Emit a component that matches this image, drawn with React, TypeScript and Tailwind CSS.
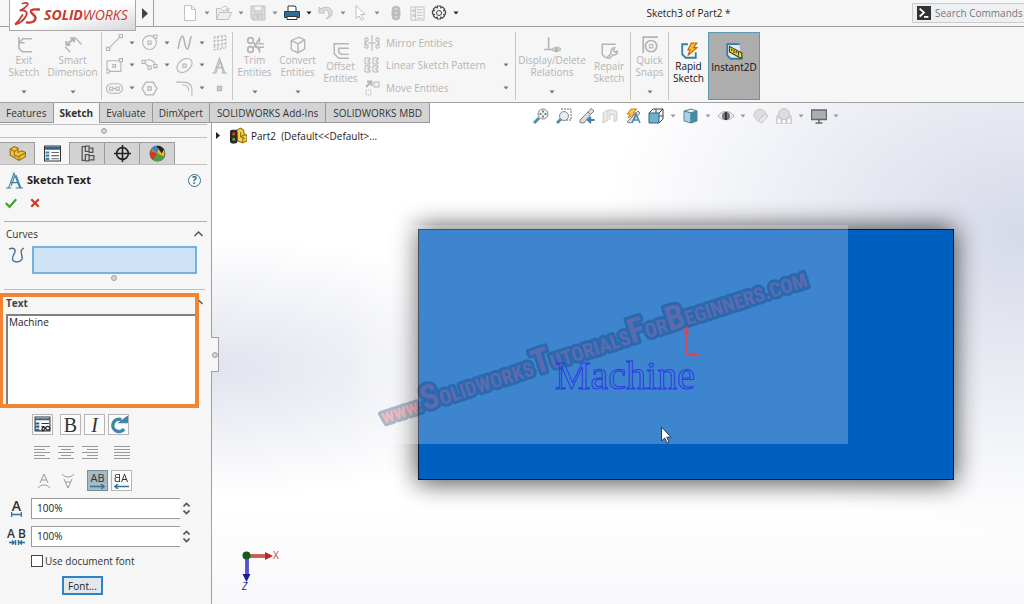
import { ReactNode, useState } from "react";

const tabs = [
    { label: "Features", pad: "px-1.5" },
    { label: "Sketch", pad: "px-1.5" },
    { label: "Evaluate", pad: "px-1.5" },
    { label: "DimXpert", pad: "px-1.5" },
    { label: "SOLIDWORKS Add-Ins", pad: "px-[7px]" },
    { label: "SOLIDWORKS MBD", pad: "px-[7px]" },
];

function Icon({ size = 16, className = "", children }: { size?: number; className?: string; children: ReactNode }) {
    return (
        <svg
            width={size}
            height={size}
            viewBox="0 0 16 16"
            fill="none"
            stroke="currentColor"
            strokeWidth="1"
            aria-hidden="true"
            className={`shrink-0 ${className}`}
        >
            {children}
        </svg>
    );
}

function Caret({ className = "text-[#777777]" }: { className?: string }) {
    return (
        <svg width="6" height="4" viewBox="0 0 6 4" fill="currentColor" aria-hidden="true" className={`shrink-0 ${className}`}>
            <path d="M0.5 0.5h5L3 3.5z" />
        </svg>
    );
}

/* ---------- title bar ---------- */

function Logo() {
    return (
        <div className="absolute top-0 left-[9px] z-10 flex h-[31px] w-[127px] items-center border border-t-0 border-[#a9a9a9] bg-linear-to-br from-white via-white to-[#d5d6d8] pl-1 text-[#c93a30]">
            <svg width="26" height="26" viewBox="0 0 26 26" fill="none" stroke="currentColor" strokeLinecap="round" aria-hidden="true">
                <path d="M8.500 1.500c4-1.200 6.500-.5 5 1.500C12 5 9.500 7 6.500 8.500" strokeWidth="1.600" />
                <path d="M6.500 8.500c5.500-.5 7.500 1.500 5.500 5.500-2.500 4.500-7 7.500-11 8.500 3-2.500 5.500-6 7.500-9.500" strokeWidth="1.800" />
                <path d="M25 7.500c-5-.5-8.500 0-8 2.500.5 2 4.500 3 4.500 6 0 3.500-4 5-8.500 4.500" strokeWidth="2.400" />
            </svg>
            <span className="ml-1 font-['Open_Sans',sans-serif] text-sm leading-5 italic">
                <b>SOLID</b>WORKS
            </span>
        </div>
    );
}

function QuickAccess() {
    const items: { label: string; icon: ReactNode; dark?: boolean }[] = [
        { label: "New", icon: <path d="M2.500 .5h7l4 4v11h-11zM9.500 .5v4h4" fill="#fff" /> },
        {
            label: "Open",
            icon: (
                <>
                    <path d="M.5 14.500v-11h4l2 2h6v2M.5 14.500l3-7h12l-3 7z" fill="#eeeeee" />
                    <path d="M6 3c2-3 6-2 6 2m0 0-2-2m2 2 2-2" />
                </>
            ),
        },
        { label: "Save", icon: <path d="M1 1h14v14H3l-2-2zM4 1v5h8V1M4 15V9h8v6M6 11h4M6 13h4" fill="#dddddd" /> },
        {
            label: "Print",
            dark: true,
            icon: (
                <>
                    <path d="M4 7V1h7l1 1v5" fill="#fff" stroke="#333333" />
                    <path d="M.5 6.500h15v6H.5z" fill="#2f6f96" stroke="#20465e" />
                    <path d="M3 11.500h10v3H3z" fill="#ffffff" stroke="#333333" />
                </>
            ),
        },
        { label: "Undo", icon: <path d="M1 2v6h6L5 6c3-2 6 0 6 3 0 2-1 3-3 5 4-1 7-4 6-8C13 2 7 1 3 4z" fill="#dddddd" /> },
        { label: "Select", icon: <path d="m4 .5 9 9H9l2.500 4.500-2 1.200L7.200 11 4 13.500z" fill="#ffffff" /> },
    ];
    return (
        <div className="flex items-center text-[#c0c0c0]">
            {items.map((item) => (
                <button key={item.label} aria-label={item.label} className="flex w-[34px] items-center justify-between pr-1.5">
                    <Icon size={16}>{item.icon}</Icon>
                    <Caret className={item.dark ? "text-[#222222]" : "text-[#888888]"} />
                </button>
            ))}
            <button aria-label="Rebuild" className="ml-0.5">
                <Icon>
                    <rect x="4" y="1" width="8" height="14" rx="4" fill="#bbbbbb" />
                    <path d="M8 3.500v1M8 7.500v1M8 11.500v1" stroke="#eeeeee" strokeWidth="3" />
                </Icon>
            </button>
            <button aria-label="File properties" className="ml-1.5">
                <Icon size={15}>
                    <path d="M1 1h14v14H1zM3 4h2v2H3zM3 9h2v2H3zM7.500 4H13M7.500 7H13M7.500 10H13M7.500 13H13M6 1v14" />
                </Icon>
            </button>
            <button aria-label="Options" className="ml-1.5 flex items-center gap-1.5 text-[#444444]">
                <Icon>
                    <circle cx="8" cy="8" r="2.500" />
                    <path
                        d="M6.500 1h3l.4 1.800 1.600-.9 2.100 2.100-.9 1.600 1.800.4v3l-1.800.4.9 1.600-2.100 2.100-1.600-.9-.4 1.800h-3l-.4-1.800-1.600.9L2.400 11l.9-1.600L1.500 9V6l1.800-.4-.9-1.600 2.100-2.100 1.600.9z"
                        strokeWidth="1.200"
                    />
                </Icon>
                <Caret className="text-[#222222]" />
            </button>
        </div>
    );
}

function TitleBar() {
    return (
        <header className="relative flex h-[27px] shrink-0 items-center border-b border-[#a0a0a0]">
            <Logo />
            <button aria-label="Show menu" className="ml-[136px] flex h-full w-[18px] items-center justify-center border-r border-[#a0a0a0]">
                <svg width="6" height="11" viewBox="0 0 6 11" fill="#444444" aria-hidden="true">
                    <path d="M0 0l6 5.500L0 11z" />
                </svg>
            </button>
            <div className="pl-7">
                <QuickAccess />
            </div>
            <h1 className="flex-1 pl-1.5 text-center text-[#222222]">Sketch3 of Part2 *</h1>
            <label className="flex h-5 w-[112px] items-center gap-1 border border-r-0 border-[#cccccc] bg-[#eeeff3] pl-1">
                <Icon size={14} className="bg-[#333333] text-white">
                    <path d="m3 3 5 4.500L3 12M8 12.500h5" strokeWidth="2" />
                </Icon>
                <input aria-label="Search Commands" placeholder="Search Commands" className="w-full min-w-0 bg-transparent placeholder:text-[#777777]" />
            </label>
        </header>
    );
}

/* ---------- command ribbon ---------- */

type BigToolProps = { lines: string[]; width: string; icon: ReactNode; caret?: boolean; low?: boolean; className?: string };

function BigTool({ lines, width, icon, caret, low, className = "" }: BigToolProps) {
    return (
        <button className={`flex h-full shrink-0 flex-col items-center ${low ? "pt-2.5" : "pt-1"} ${width} ${className}`}>
            <Icon size={18}>{icon}</Icon>
            <span className="flex flex-col leading-3">
                {lines.map((line) => (
                    <span key={line} className="whitespace-nowrap">{line}</span>
                ))}
            </span>
            {caret && <Caret className="mt-3 text-[#777777]" />}
        </button>
    );
}

const sketchTools: { label: string; icon: ReactNode; caret?: boolean }[] = [
    { label: "Line", caret: true, icon: <path d="M2.500 13.500l11-11M.5 12.500h3v3h-3zM12.500 .5h3v3h-3z" /> },
    { label: "Circle", caret: true, icon: <><circle cx="8" cy="8" r="6.500" /><path d="M6.500 6.500h3v3h-3zM12 1h3v3h-3z" fill="#f6f6f6" /></> },
    { label: "Spline", caret: true, icon: <path d="M2 14C3 8 4 2 6 2s2 12 4.500 12S12 7 14.500 2" strokeWidth="1.500" /> },
    { label: "Plane", icon: <path d="M3 3l11-2v12L3 15zM3 7l11-2M3 11l11-2M6.500 2.500v12M10.500 2v12" strokeDasharray="2 1" /> },
    { label: "Rectangle", caret: true, icon: <><path d="M1 3.500h13v10H1z" /><path d="M6.500 7h2.500v2.500H6.500zM12.500 1.500h3v3h-3zM0 12h3v3H0z" fill="#f6f6f6" /></> },
    { label: "Arc", caret: true, icon: <><path d="M3 5c3-4 9-3 11 3M3 5l5 5" /><path d="M1 3h3v3H1zM6.500 8.500h3v3h-3zM12 7h3v3h-3z" fill="#f6f6f6" /></> },
    { label: "Ellipse", caret: true, icon: <><ellipse cx="8" cy="8" rx="8" ry="5.500" transform="rotate(-40 8 8)" /><path d="M6.500 6.500h3v3h-3z" /></> },
    { label: "Text", icon: <path d="M1 15h4M10 15h5M3 15L8 1l5 14M5 10h6M4.500 15L8.500 4l3 11" /> },
    { label: "Slot", caret: true, icon: <><rect x=".5" y="3.500" width="15" height="9" rx="4.500" /><path d="M3.500 6.500h3v3h-3zM9.500 6.500h3v3h-3zM6.500 8h3" /></> },
    { label: "Polygon", icon: <path d="M4.500 2h7L15 8l-3.500 6h-7L1 8zM6.500 6.500h3v3h-3z" strokeWidth="1.200" /> },
    { label: "Fillet", caret: true, icon: <path d="M0 2h8c4 0 7 3 7 7v6M6 4.500c4 0 6 2 6 6" /> },
    { label: "Point", icon: <path d="M6 6h4v4H6z" fill="#cccccc" /> },
];

const patternTools: { label: string; icon: ReactNode; caret?: boolean }[] = [
    { label: "Mirror Entities", icon: <path d="M8 0v16M1 3h3v3H2v4h2v3H1zM15 3h-3v3h2v4h-2v3h3zM4 8h8" /> },
    {
        label: "Linear Sketch Pattern",
        caret: true,
        icon: <path d="M1 1h5v2H4v2h2v2H1zM9 1h5v2h-2v2h2v2H9zM1 9h5v2H4v2h2v2H1zM9 9h5v2h-2v2h2v2H9z" />,
    },
    { label: "Move Entities", caret: true, icon: <><path d="M2 7l5-5M3 1.500h4.500V6" strokeWidth="1.800" /><path d="M10 2h5v5h-5z" /><path d="M2 10h5v5H2z" strokeDasharray="1 1" /></> },
];

function Separator() {
    return <div className="h-[68px] w-px shrink-0 bg-[#c8c8c8]" />;
}

function Ribbon() {
    return (
        <nav aria-label="Sketch commands" className="flex h-[76px] shrink-0 items-center border-b border-[#a0a0a0] pt-0.5 text-[#b4b4b4]">
            <div className="flex h-[68px] items-center">
                <BigTool width="w-12" lines={["Exit", "Sketch"]} caret icon={<path d="M15 2.500H7L3.500 6v5l3 3H15M3.500 1v5h5" strokeWidth="1.400" />} />
                <BigTool width="mr-1 w-[49px]" lines={["Smart", "Dimension"]} caret icon={<><path d="M2 8l7-6M2 8V4.500M2 8h3.500M9 2v3.500M9 2H5.500" strokeWidth="1.700" /><path d="M1 9.500l4.500 5M9.500 1l6 6.500" strokeWidth="1.200" /></>} />
                <Separator />
                <div className="grid h-[68px] grid-cols-[35px_35px_35px_21px] items-center pl-1">
                    {sketchTools.map((tool) => (
                        <button key={tool.label} aria-label={tool.label} className="flex items-center gap-1.5">
                            <Icon size={17}>{tool.icon}</Icon>
                            {tool.caret && <Caret />}
                        </button>
                    ))}
                </div>
                <Separator />
                <BigTool
                    width="w-[43px]"
                    lines={["Trim", "Entities"]}
                    caret
                    icon={
                        <>
                            <circle cx="4" cy="4" r="2.500" strokeWidth="1.500" />
                            <circle cx="4" cy="12" r="2.500" strokeWidth="1.500" />
                            <path d="M6 11l6-9M6 5l6 8M8 7h8M8 10h8M12 1v5M12 10v5" strokeWidth="1.300" />
                        </>
                    }
                />
                <BigTool width="w-[43px]" lines={["Convert", "Entities"]} caret icon={<path d="M2 4l7-3 5 2.500v8L8 15l-6-3zM2 4l6 3 6-3.500M8 7v8" strokeWidth="1.200" />} />
                <BigTool width="w-[43px]" lines={["Offset", "Entities"]} low icon={<path d="M15 1.500H2v9l4 4h9M15 5.500H6v3.500l2 2h7" strokeWidth="1.300" />} />
                <div className="grid h-[68px] w-[153px] content-around pl-0.5">
                    {patternTools.map((tool) => (
                        <button key={tool.label} className="flex items-center gap-1.5 pr-1.5 text-left">
                            <Icon>{tool.icon}</Icon>
                            <span className="flex-1 whitespace-nowrap">{tool.label}</span>
                            {tool.caret && <Caret />}
                        </button>
                    ))}
                </div>
                <Separator />
                <BigTool
                    width="w-[72px]"
                    lines={["Display/Delete", "Relations"]}
                    caret
                    icon={
                        <>
                            <path d="M5 1v11M1 12h8" strokeWidth="1.500" />
                            <path d="M8 12c2-3 6-3 8 0-2 2.500-6 2.500-8 0z" fill="#dddddd" />
                            <circle cx="12" cy="12" r="1.200" fill="currentColor" />
                        </>
                    }
                />
                <BigTool width="w-[42px]" lines={["Repair", "Sketch"]} low icon={<path d="M14 2H2v9l3 3M6 14l4-4c-1-3 1-5 3-5l-1 3 1.500 1L15.500 8c0 3-2 4-4 3.500l-3 3z" strokeWidth="1.300" />} />
                <Separator />
                <BigTool
                    width="w-[37px]"
                    lines={["Quick", "Snaps"]}
                    caret
                    icon={
                        <>
                            <path d="M2 15V1h13" strokeWidth="1.500" />
                            <circle cx="9" cy="9" r="5" strokeWidth="1.500" />
                            <path d="M7.500 7.500h3v3h-3z" />
                        </>
                    }
                />
                <Separator />
                <BigTool
                    width="w-[39px]"
                    lines={["Rapid", "Sketch"]}
                    low
                    className="text-[#111111]"
                    icon={
                        <>
                            <path d="M7 2H2v9l3 3h9V9" stroke="#2f7fa0" strokeWidth="1.600" />
                            <path d="M10 1h5l-3 4h3l-8 7 2-5H7z" fill="#ffc21a" stroke="#c8641b" />
                        </>
                    }
                />
                <BigTool
                    width="w-[52px]"
                    lines={["Instant2D"]}
                    low
                    className="border border-[#5b9ab0] bg-[#adadad] text-[#111111]"
                    icon={
                        <>
                            <path d="M13 1H2v10l3 3h9" fill="#dfe9ee" stroke="#2f7fa0" strokeWidth="1.600" />
                            <path d="M4 3l11 6v5L4 8z" fill="#f2dc3c" stroke="#3b3b10" />
                            <path d="M6 5v2M8 6v3M10 7v2M12 8v3" stroke="#3b3b10" />
                        </>
                    }
                />
            </div>
        </nav>
    );
}

/* ---------- view toolbar ---------- */

const viewTools: { label: string; icon: ReactNode; caret?: boolean }[] = [
    { label: "Zoom to fit", icon: <><path d="M1 15l5-5" stroke="#4c8fb5" strokeWidth="3" /><circle cx="10" cy="6" r="5" fill="#f4f4f4" stroke="#888888" /><path d="M10 2.500v2M10 7.500v2M6.500 6h2M11.500 6h2" stroke="#555555" strokeWidth="1.500" /></> },
    { label: "Zoom to area", icon: <><path d="M1 15l4-4" stroke="#4c8fb5" strokeWidth="3" /><path d="M5 1h10v11H9" stroke="#666666" strokeDasharray="2 1" /><circle cx="8" cy="8" r="4.500" fill="#e4eef2" stroke="#888888" /></> },
    { label: "Previous view", icon: <><path d="M1 12l8-8 3-3.500 3 2.500-4 4-6 8-4-.5z" fill="#dddddd" stroke="#808080" /><path d="M9 4l3 3" stroke="#808080" /><path d="M15.500 12H9m3-3-3 3 3 3" stroke="#367fae" strokeWidth="2" /></> },
    { label: "Section view", icon: <path d="M1 5l5-3v10l-5 3zM6 2h5l4 2v8l-3 2V7L8 6v6" fill="#e8e8e8" stroke="#cccccc" /> },
    { label: "View annotations", icon: <><path d="M6 1h6L8 5h3L3 10l2-4H2z" fill="#ffc544" stroke="#cb7c20" /><path d="M2 14L13 3l2 2-9 10z" fill="#dddddd" stroke="#808080" /><path d="M7 15l4-9 4 9M9 12h4" stroke="#3f89b5" strokeWidth="1.500" /></> },
    { label: "View orientation", caret: true, icon: <><path d="M1 5l4-4h10v10l-4 4M15 1l-4 4M8 1v4M11 8h4" fill="#f4f4f4" stroke="#444444" /><path d="M1 5h10v10H1z" fill="#6fb1cf" stroke="#31657f" /></> },
    { label: "Display style", caret: true, icon: <><path d="M1 3l7-2 6 2-6 2z" fill="#e3f0f5" stroke="#55859a" /><path d="M1 3l7 2v10l-7-2z" fill="#a6d3e6" stroke="#55859a" /><path d="M8 5l6-2v10l-6 2z" fill="#438baa" stroke="#55859a" /></> },
    { label: "Hide/show items", caret: true, icon: <><path d="M0 8c4-6 12-6 16 0-4 5-12 5-16 0z" fill="#eeeeee" stroke="#aaaaaa" /><circle cx="8" cy="8" r="3.500" fill="#777777" stroke="#666666" /><path d="M8 4v8" stroke="#222222" strokeWidth="1.500" /></> },
    { label: "Edit appearance", icon: <><circle cx="7" cy="7" r="6" fill="#dddddd" stroke="#cccccc" /><path d="M5 13l7-7 3 2-6 7z" fill="#e8e8e8" stroke="#c4c4c4" /></> },
    { label: "Apply scene", caret: true, icon: <><path d="M0 8h16v8H0z" fill="#d8d8d8" stroke="#cccccc" /><circle cx="8" cy="6" r="5.500" fill="#dddddd" stroke="#c4c4c4" /><path d="M3 11v4M8 12v3M13 11v4" stroke="#ffffff" strokeWidth="2" /></> },
    { label: "View settings", caret: true, icon: <><path d="M.5 2h15v9.500H.5z" fill="#a9aeb2" stroke="#666666" strokeWidth="1.300" /><path d="M8 12v3M4.500 15h7" stroke="#666666" strokeWidth="1.500" /></> },
];

function ViewToolbar() {
    return (
        <div className="ml-[103px] flex items-center gap-[7px] pt-1.5">
            {viewTools.map((tool) => (
                <button key={tool.label} aria-label={tool.label} className="flex items-center gap-1.5">
                    <Icon>{tool.icon}</Icon>
                    {tool.caret && <Caret className="text-[#999999]" />}
                </button>
            ))}
        </div>
    );
}

/* ---------- property manager ---------- */

function Dot() {
    return <span className="block size-1.5 rounded-full border border-[#a0a0a0] bg-[#d5d5d5]" />;
}

function Chevron() {
    return (
        <svg width="9" height="6" viewBox="0 0 9 6" fill="none" stroke="#555555" strokeWidth="1.500" aria-hidden="true">
            <path d="M.5 5L4.500 1l4 4" />
        </svg>
    );
}

const panelTabs: { label: string; icon: ReactNode }[] = [
    { label: "Feature tree", icon: <><path d="M1 4l4-2.500 3.500 1.500v4L12 5.500l3.500 1.500v4L9.500 14.500 1 9.500z" fill="#f4c431" stroke="#93701a" /><path d="M1 4l4 2v4l4.500 1M5 6l3.500-2M9.500 14.500v-4l6-3" stroke="#93701a" /></> },
    { label: "Properties", icon: <><path d="M.5 1h15v14H.5z" fill="#ffffff" stroke="#333333" /><path d="M1 3h14" stroke="#2c688a" strokeWidth="3" /><path d="M1.500 7H5M1.500 10H5M1.500 13H5" stroke="#3b83a8" strokeWidth="2" /><path d="M7 7h7M7 10h7M7 13h7" stroke="#666666" /></> },
    { label: "Configurations", icon: <path d="M3 1v14M3 1.500h3M3 14.500h3M6 1h3.500v5H6zM6 9h3.500v6H6zM9.500 3H13v4H9.500zM9.500 10H14v4H9.500z" stroke="#555555" strokeWidth="1.200" /> },
    { label: "DimXpert", icon: <><circle cx="8" cy="8" r="5.500" stroke="#222222" strokeWidth="1.500" /><path d="M8 0v16M0 8h16" stroke="#222222" strokeWidth="1.500" /></> },
    { label: "Display", icon: <><circle cx="8" cy="8" r="7" fill="#e3bb2e" stroke="#666666" /><path d="M8 8L2 4a7 7 0 0 1 7-3z" fill="#3f86c0" stroke="none" /><path d="M8 8L1.500 5A7 7 0 0 0 4 14z" fill="#cc3a2c" stroke="none" /><path d="M8 8l6.500 3A7 7 0 0 1 4 14z" fill="#4c9d3c" stroke="none" /><path d="M7 1l5 7 2-4-4-3z" fill="#222222" stroke="none" /></> },
];

function FormatButton({ label, active, children }: { label: string; active?: boolean; children: ReactNode }) {
    return (
        <button
            aria-label={label}
            className={`flex size-[21px] items-center justify-center border text-[#333333] ${active ? "border-[#7b8c94] bg-[#a8b9c2]" : "border-[#b5b5b5] bg-[#fbfbfb]"}`}
        >
            {children}
        </button>
    );
}

function AlignIcon({ d }: { d: string }) {
    return (
        <Icon size={16} className="text-[#999999]">
            <path d={d} strokeWidth="1.200" />
        </Icon>
    );
}

function PercentField({ id, label, icon }: { id: string; label: string; icon: ReactNode }) {
    const [value, setValue] = useState(100);
    return (
        <div className="flex h-[21px] items-center">
            <label htmlFor={id} aria-label={label} className="flex w-[31px] justify-center pl-0.5">
                {icon}
            </label>
            <input
                id={id}
                value={`${value}%`}
                onChange={(e) => setValue(parseInt(e.target.value) || 0)}
                className="h-full w-[149px] border border-r-0 border-[#999999] bg-white px-[5px] pb-0.5 text-[#222222]"
            />
            <div className="flex h-full w-3 flex-col items-center justify-between py-1">
                <button aria-label={`Increase ${label}`} onClick={() => setValue(value + 1)}>
                    <svg width="7" height="5" viewBox="0 0 7 5" fill="none" stroke="#555555" strokeWidth="1.600" className="block">
                        <path d="M.5 4.500l3-3 3 3" />
                    </svg>
                </button>
                <button aria-label={`Decrease ${label}`} onClick={() => setValue(value - 1)}>
                    <svg width="7" height="5" viewBox="0 0 7 5" fill="none" stroke="#555555" strokeWidth="1.600" className="block">
                        <path d="M.5 .5l3 3 3-3" />
                    </svg>
                </button>
            </div>
        </div>
    );
}

function PropertyPanel() {
    const [text, setText] = useState("Machine");
    const [docFont, setDocFont] = useState(false);

    return (
        <aside className="relative w-[212px] shrink-0 border-r border-[#a0a0a0] bg-[#f6f6f6]">
            <div className="mt-px mr-1 flex h-3.5 items-center justify-center border-y border-[#c0c0c0]">
                <Dot />
            </div>
            <div className="mr-1 flex border-b border-[#c0c0c0] pt-1">
                {panelTabs.map((tab, i) => (
                    <button
                        key={tab.label}
                        aria-label={tab.label}
                        className={`flex h-[22px] w-[35px] items-center justify-center border-r border-[#999999] ${i === 1 ? "bg-[#f6f6f6]" : "border-t bg-[#d3d3d3]"}`}
                    >
                        <Icon size={17}>{tab.icon}</Icon>
                    </button>
                ))}
            </div>

            <div className="mt-[5px] flex h-5 items-center pr-2.5 pl-1.5">
                <Icon size={17} className="text-[#3c7ba0]">
                    <path d="M0 15h5M9 15h7M2.500 15L7.500 1l5.500 14M4.500 10h6M5 13L8 4M9.500 3L14 15" />
                </Icon>
                <h2 className="ml-1 flex-1 text-[11px] font-bold text-[#222222]">Sketch Text</h2>
                <button aria-label="Help" className="flex size-[13px] items-center justify-center rounded-full border border-[#3f6f8c] font-bold text-[#2e6588]">
                    ?
                </button>
            </div>
            <div className="mt-[5px] mr-1 ml-1 flex h-[27px] items-start gap-3 border-b border-[#b0b0b0] pt-0.5 pl-px">
                <button aria-label="OK">
                    <Icon size={12} className="text-[#43a52c]">
                        <path d="M1 8l5 5 9-10" strokeWidth="3" />
                    </Icon>
                </button>
                <button aria-label="Cancel">
                    <Icon size={12} className="text-[#cf3a20]">
                        <path d="M3 3l10 10M13 3L3 13" strokeWidth="3" />
                    </Icon>
                </button>
            </div>

            <section>
                <div className="flex h-6 items-center justify-between pr-2 pl-1.5">
                    <h3 className="font-medium text-[#333333]">Curves</h3>
                    <button aria-label="Collapse curves"><Chevron /></button>
                </div>
                <div className="flex pl-2">
                    <label htmlFor="curves" aria-label="Curves" className="w-6">
                        <Icon size={17} className="text-[#4a6f94]">
                            <path d="M1 3c4-2 7 0 5 4-3 5-2 8 2 8 5 0 6-3 5-6-1-4-1-6 2-7" strokeWidth="1.300" />
                        </Icon>
                    </label>
                    <input id="curves" className="h-7 w-[165px] border-2 border-[#73b3de] bg-[#cfe3f7]" />
                </div>
                <div className="mt-px flex justify-center pl-4">
                    <Dot />
                </div>
            </section>

            <div className="mt-2 mr-1.5 ml-1 h-px bg-[#c0c0c0]" />

            <section className="relative mt-[3px]">
                <div className="absolute top-1.5 right-2"><Chevron /></div>
                <div className="relative h-[115px] w-[199px] border-4 border-l-3 border-[#f28434] bg-[#f6f6f6] pl-[3px]">
                    <label htmlFor="sketch-text" className="block h-[17px] leading-3 font-bold text-[#444444]">
                        Text
                    </label>
                    <textarea
                        id="sketch-text"
                        value={text}
                        onChange={(e) => setText(e.target.value)}
                        className="block h-[90px] w-full resize-none border-t-2 border-l-2 border-[#808080] bg-white px-px leading-3 text-[#222222]"
                    />
                </div>
            </section>

            <div className="mt-1.5 flex gap-[3px] pl-8">
                <FormatButton label="Link to property">
                    <Icon size={17}>
                        <path d="M1 1h14v13H1z" fill="#ffffff" stroke="#333333" />
                        <path d="M1 3h14M1 7h4M1 10h4M1 13h4" stroke="#2f6685" strokeWidth="2" />
                        <path d="M7 7h7M7 10h3" />
                        <path d="M8 14c-1-2 0-4 2-3s2 3 4 2 0-4-2-3-2 4-4 4z" strokeWidth="1.300" />
                    </Icon>
                </FormatButton>
                <div className="ml-1 flex gap-[3px] font-['Liberation_Serif',serif] text-xl leading-5">
                    <FormatButton label="Bold">B</FormatButton>
                    <FormatButton label="Italic"><i>I</i></FormatButton>
                    <FormatButton label="Rotate">
                        <Icon size={18} className="text-[#3d86a8]">
                            <path d="M12.500 11.500A5.500 5.500 0 1 1 10 3.200" strokeWidth="3" />
                            <path d="M8 6h8V0z" fill="#3d86a8" />
                        </Icon>
                    </FormatButton>
                </div>
            </div>
            <div className="mt-2.5 flex gap-2 pl-[34px]">
                <button aria-label="Align left"><AlignIcon d="M0 1.500h16M0 4.500h11M0 7.500h16M0 10.500h11M0 13.500h16" /></button>
                <button aria-label="Center"><AlignIcon d="M0 1.500h16M3 4.500h10M0 7.500h16M3 10.500h10M0 13.500h16" /></button>
                <button aria-label="Align right"><AlignIcon d="M0 1.500h16M5 4.500h11M0 7.500h16M5 10.500h11M0 13.500h16" /></button>
                <button aria-label="Justify" className="ml-2"><AlignIcon d="M0 1.500h16M0 4.500h16M0 7.500h16M0 10.500h16M0 13.500h16" /></button>
            </div>
            <div className="mt-[9px] flex items-center pl-9 text-[#999999]">
                <button aria-label="Flip vertical" className="w-6">
                    <Icon>
                        <path d="M4 10l4-9 4 9M5.500 7h5M2 15c3-4 9-4 12 0" />
                    </Icon>
                </button>
                <button aria-label="Flip upside down">
                    <Icon>
                        <path d="M2 1c3 4 9 4 12 0M4 6l4 9 4-9M5.500 9h5" />
                    </Icon>
                </button>
                <div className="ml-[11px] flex gap-[3px]">
                    <FormatButton label="Left to right" active>
                        <span className="flex flex-col items-center text-[11px] leading-3 font-medium">
                            AB
                            <svg width="15" height="5" viewBox="0 0 15 5" fill="none" stroke="#2f7598" strokeWidth="1.500" aria-hidden="true"><path d="M0 2.500h14M11 0l3 2.500L11 5" /></svg>
                        </span>
                    </FormatButton>
                    <FormatButton label="Right to left">
                        <span className="flex flex-col items-center text-[11px] leading-3 font-medium">
                            <span className="-scale-x-100">AB</span>
                            <svg width="15" height="5" viewBox="0 0 15 5" fill="none" stroke="#2f7598" strokeWidth="1.500" aria-hidden="true"><path d="M15 2.500H1M4 0L1 2.500 4 5" /></svg>
                        </span>
                    </FormatButton>
                </div>
            </div>

            <div className="mt-[7px] flex flex-col gap-[7px]">
                <PercentField
                    id="width-factor"
                    label="Width factor"
                    icon={
                        <span className="flex flex-col items-center text-sm leading-3 font-semibold text-[#333333]">
                            A
                            <svg width="11" height="5" viewBox="0 0 11 5" fill="none" stroke="#2f7598" strokeWidth="1.500" aria-hidden="true"><path d="M.5 0v5M10.500 0v5M1 2.500h9" /></svg>
                        </span>
                    }
                />
                <PercentField
                    id="spacing"
                    label="Spacing"
                    icon={
                        <span className="flex flex-col items-center text-xs leading-3 font-semibold text-[#333333]">
                            A B
                            <svg width="16" height="5" viewBox="0 0 16 5" fill="none" stroke="#2f7598" strokeWidth="1.500" aria-hidden="true"><path d="M6.500 0v5M9.500 0v5M0 2.500h5M3 .5l2 2-2 2M16 2.500h-5M13 .5l-2 2 2 2" /></svg>
                        </span>
                    }
                />
            </div>

            <label className="mt-[7px] flex h-3.5 items-center gap-0.5 pl-[31px] text-[#333333]">
                <input
                    type="checkbox"
                    checked={docFont}
                    onChange={() => setDocFont(!docFont)}
                    className="size-3 appearance-none border border-[#444444] bg-white checked:bg-[#2d7dc4]"
                />
                Use document font
            </label>
            <button className="mt-2 ml-[62px] block h-[19px] w-[41px] border-2 border-[#2d83c6] bg-[#e3e8ec] leading-3 text-[#222222]">Font...</button>

            {/* splitter handle */}
            <div className="absolute top-[214px] -right-2 z-10 flex h-[35px] w-2 items-center justify-center border border-l-0 border-[#a0a0a0] bg-[#f6f6f6]">
                <Dot />
            </div>
        </aside>
    );
}

/* ---------- graphics area ---------- */

function GraphicsArea() {
    return (
        <main className="relative min-w-0 flex-1">
            <svg viewBox="212 123 812 481" preserveAspectRatio="xMinYMin meet" className="absolute inset-0 size-full">
                <defs>
                    <filter id="shadow" x="-20%" y="-30%" width="140%" height="160%">
                        <feGaussianBlur stdDeviation="13" />
                    </filter>
                    <linearGradient id="haze">
                        <stop offset="0" stopColor="#ffffff" stopOpacity="0" />
                        <stop offset="0.100" stopColor="#ffffff" stopOpacity="0.240" />
                    </linearGradient>
                </defs>
                <rect x="417" y="227" width="538" height="256" fill="#000000" opacity="0.700" filter="url(#shadow)" />
                <rect x="418.500" y="229.500" width="535" height="250" fill="#0060c0" stroke="#0b1a30" />
                <rect x="346" y="225" width="502" height="219" fill="url(#haze)" />

                <g stroke="#f03c46" fill="#f03c46" opacity="0.850">
                    <path d="M686.500 354.500V334M686.500 354.500h6" fill="none" />
                    <path d="M686.500 326l3.500 8h-7zM700 354.500l-9 2.500v-5z" stroke="none" />
                </g>

                <g transform="rotate(-18 384 424)" opacity="0.300">
                    <text
                        x="384"
                        y="424"
                        fontSize="20"
                        fontWeight="700"
                        fill="#a03070"
                        stroke="#002a60"
                        strokeWidth="6"
                        strokeLinejoin="round"
                        paintOrder="stroke"
                        className="font-['Liberation_Sans_Narrow','Roboto_Condensed','Open_Sans_Condensed',Roboto,sans-serif]"
                    >
                        <tspan fill="#f03040">www</tspan>.<tspan fontSize="34">S</tspan>OLIDWORKS<tspan fontSize="34">T</tspan>UTORIALS<tspan fontSize="34">F</tspan>OR<tspan fontSize="34">B</tspan>EGINNERS.COM
                    </text>
                </g>

                <text x="555" y="389" fontSize="40" fill="none" stroke="#3038e4" className="font-['Liberation_Serif',serif]">
                    Machine
                </text>

                <path d="M661.500 427v14l3.200-3 2.300 5 2-1-2.200-4.800h4.200z" fill="#ffffff" stroke="#2a3a55" />

                {/* orientation triad */}
                <path d="M247 554.500h19v3h-19z" fill="#cf5a50" stroke="#9c2a24" strokeWidth="0.500" />
                <path d="M265 552l8 4-8 4z" fill="#b82a24" />
                <path d="M245.500 557h3v19h-3z" fill="#5050d8" stroke="#2020a0" strokeWidth="0.500" />
                <path d="M242.500 574h8l-4 8z" fill="#1a1a9c" />
                <circle cx="246.500" cy="555.500" r="4" fill="#145a20" />
                <text x="273" y="559" fontSize="10" fill="#c83c3c">X</text>
                <text x="242" y="590" fontSize="10" fontStyle="italic" fill="#2020a0">Z</text>
            </svg>

            <button className="relative flex items-center pt-1 pl-1 text-[#222222]">
                <svg width="4" height="7" viewBox="0 0 4 7" fill="#222222" aria-hidden="true"><path d="M0 0l4 3.500L0 7z" /></svg>
                <Icon size={17} className="mr-1 ml-2.5">
                    <path d="M6 3l4-2 3 2v3l3 2v5l-4 2-5-2z" fill="#f4cf3c" stroke="#93701a" />
                    <path d="M10 5v4l4 2M10 9l5-2M12 11v4" stroke="#93701a" />
                    <rect x=".5" y="3" width="6" height="12" rx="1.500" fill="#442222" stroke="#222222" />
                    <circle cx="3.500" cy="6.500" r="1.500" fill="#e03c2c" stroke="none" />
                    <circle cx="3.500" cy="11.500" r="1.500" fill="#38b048" stroke="none" />
                </Icon>
                <span className="whitespace-pre">Part2  (Default&lt;&lt;Default&gt;...</span>
            </button>
        </main>
    );
}

export default function App() {
    const [activeTab, setActiveTab] = useState("Sketch");

    return (
        <div className="flex h-screen min-h-[604px] flex-col overflow-hidden bg-[#f6f6f6] font-['Open_Sans',sans-serif] text-[10px] leading-4 text-[#333333]">
            <TitleBar />
            <Ribbon />
            <div className="flex flex-1 flex-col bg-[radial-gradient(ellipse_340px_130px_at_212px_265px,#e1e4ee,transparent),radial-gradient(ellipse_420px_300px_at_100%_130px,#d6dae8,transparent),linear-gradient(#ffffff,#ffffff_80%,#f8f8fb)]">
                <div className="flex h-5 shrink-0">
                    <div role="tablist" className="flex h-5">
                        {tabs.map(({ label, pad }) => (
                            <button
                                key={label}
                                role="tab"
                                aria-selected={label === activeTab}
                                onClick={() => setActiveTab(label)}
                                className={`border-r border-[#999999] whitespace-nowrap ${pad} ${
                                    label === activeTab ? "bg-[#f6f6f6] font-bold" : "border-b bg-[#d3d3d3]"
                                }`}
                            >
                                {label}
                            </button>
                        ))}
                    </div>
                    <ViewToolbar />
                </div>
                <div className="flex flex-1">
                    <PropertyPanel />
                    <GraphicsArea />
                </div>
            </div>
        </div>
    );
}
